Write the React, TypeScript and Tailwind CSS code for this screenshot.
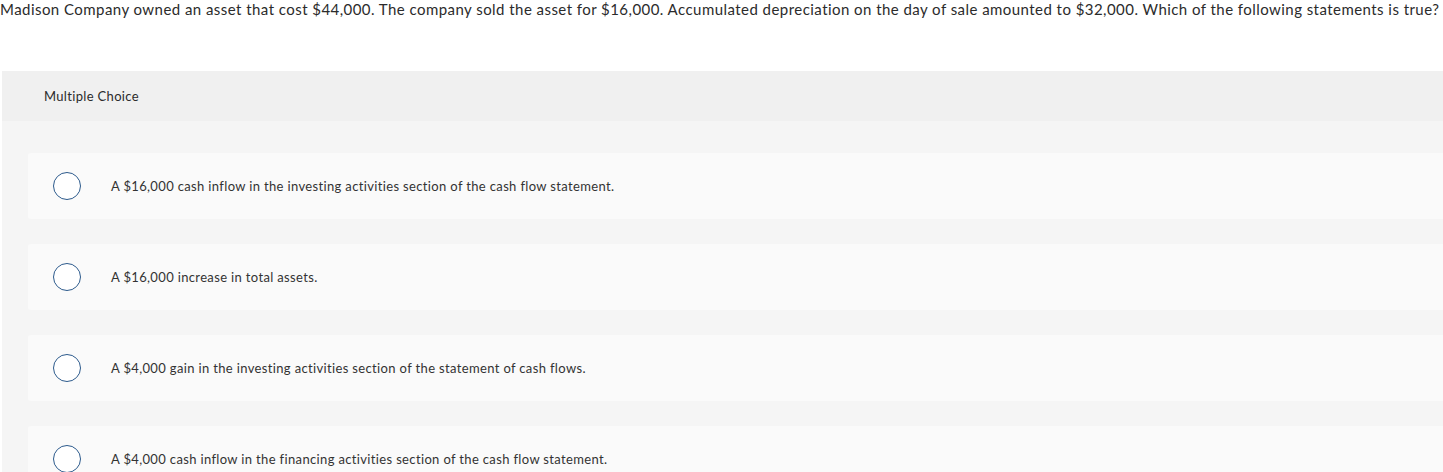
const options = [
  "A $16,000 cash inflow in the investing activities section of the cash flow statement.",
  "A $16,000 increase in total assets.",
  "A $4,000 gain in the investing activities section of the statement of cash flows.",
  "A $4,000 cash inflow in the financing activities section of the cash flow statement.",
];

function App() {
  return (
    <main className="bg-white text-[#2b2b2b] font-['Lato',sans-serif] min-h-screen overflow-hidden">
      <p className="text-[15px] leading-[18px] tracking-[0.45px] whitespace-nowrap">
        Madison Company owned an asset that cost $44,000. The company sold the asset for $16,000. Accumulated depreciation on the day of sale amounted to $32,000. Which of the following statements is true?
      </p>

      <section className="ml-[2px] mt-[53px] bg-[#f5f5f5]">
        <div className="h-[50px] bg-[#f0f0f0] flex items-center pl-[42px] pt-[2px] text-[13px] tracking-[0.33px]">
          Multiple Choice
        </div>
        <div className="pt-[32px] pl-[26px] flex flex-col gap-[25px]">
          {options.map((text) => (
            <div key={text} className="h-[66px] bg-[#fafafa] rounded-l-[3px] flex items-center">
              <span className="ml-[25px] w-[28px] h-[28px] rounded-full border-[1.5px] border-[#2c5a8c] bg-white shrink-0" />
              <span className="ml-[30px] pt-[2px] text-[13px] tracking-[0.35px] text-[#333]">{text}</span>
            </div>
          ))}
        </div>
      </section>
    </main>
  );
}

export default App;
